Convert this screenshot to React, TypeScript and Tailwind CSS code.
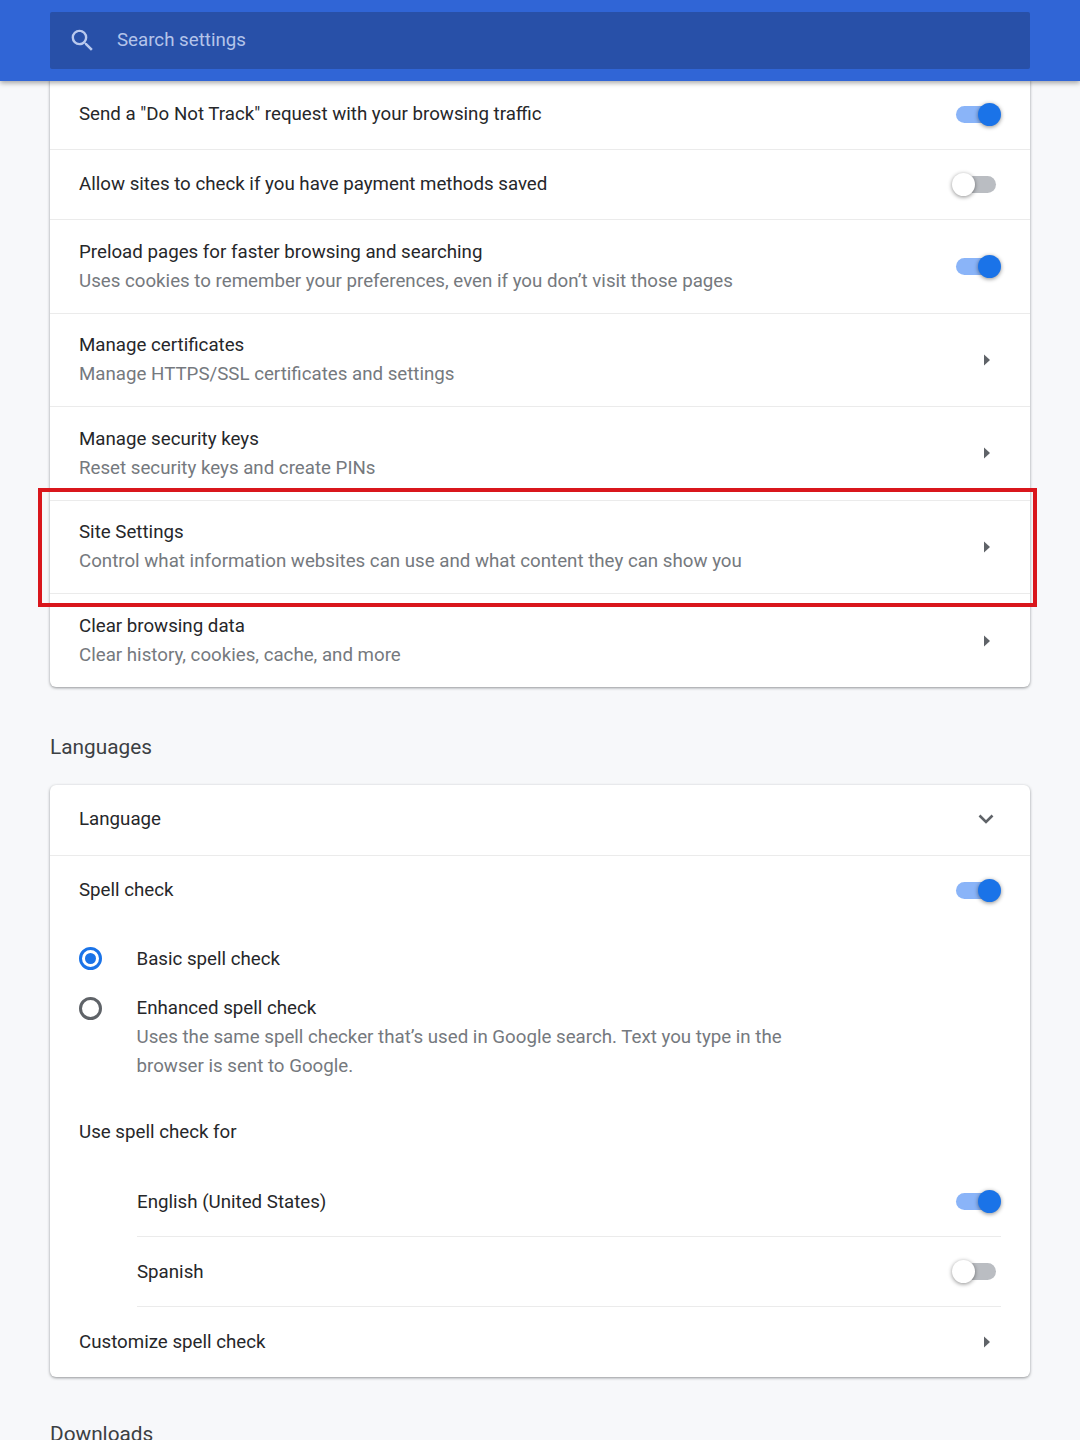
import React from "react";

const Toggle = ({ on }: { on?: boolean }) => {
  if (on) {
    return (
      <div className="relative h-[23px] w-[45px] shrink-0">
        <div className="absolute left-0 top-[3px] h-[17px] w-[40px] rounded-full bg-[#8ab4f8]" />
        <div className="absolute right-0 top-0 h-[23px] w-[23px] rounded-full bg-[#1a73e8] shadow-[0_1px_4px_rgba(0,0,0,0.45)]" />
      </div>
    );
  }
  return (
    <div className="relative mr-[5px] h-[23px] w-[44px] shrink-0">
      <div className="absolute right-0 top-[3px] h-[17px] w-[40px] rounded-full bg-[#babdc2]" />
      <div className="absolute left-0 top-0 h-[23px] w-[23px] rounded-full bg-white shadow-[0_1px_4px_rgba(0,0,0,0.45)]" />
    </div>
  );
};

const Arrow = () => (
  <svg width="8" height="12" viewBox="0 0 8 12" className="mr-[10px] shrink-0">
    <path d="M1 0.5 L7 6 L1 11.5 Z" fill="#5f6368" />
  </svg>
);

const Row = ({ title, sub, on, toggle, arrow, first, shift }: { title: string; sub?: string; on?: boolean; toggle?: boolean; arrow?: boolean; first?: boolean; shift?: boolean }) => (
  <div className={`flex items-center justify-between pl-[29px] pr-[29px] ${first ? "" : "border-t border-[#ebebeb]"} ${sub ? "h-[93.6px]" : "h-[70px]"}`}>
    <div className={shift ? "pt-[2px]" : ""}>
      <div className="text-[#26272a] leading-[29px]">{title}</div>
      {sub && <div className="text-[#75797e] leading-[29px]">{sub}</div>}
    </div>
    {toggle && <Toggle on={on} />}
    {arrow && <Arrow />}
  </div>
);

const App = () => {
  return (
    <div className="h-[1440px] overflow-hidden bg-[#f7f8fa] text-[18.72px] font-['Roboto',sans-serif]">
      {/* HEADER */}
      <div className="relative z-10 h-[81px] bg-[#3065d6] px-[50px] pt-[12px] shadow-[0_2px_5px_rgba(0,0,0,0.35)]">
        <div className="flex h-[57px] w-[980px] items-center rounded-[2px] bg-[#2850a8] pl-[17.5px]">
          <svg width="29" height="29" viewBox="0 0 24 24" fill="#b9c9ee" className="shrink-0">
            <path d="M15.5 14h-.79l-.28-.27A6.47 6.47 0 0 0 16 9.5 6.5 6.5 0 1 0 9.5 16c1.61 0 3.09-.59 4.23-1.57l.27.28v.79l5 4.99L20.49 19l-4.99-5zm-6 0C7.01 14 5 11.99 5 9.5S7.01 5 9.5 5 14 7.01 14 9.5 11.99 14 9.5 14z" />
          </svg>
          <span className="ml-[20.5px] text-[#b4c4ea]">Search settings</span>
        </div>
      </div>

      <div className="px-[50px]">
        {/* PRIVACY CARD */}
        <div className="-mt-[2px] w-[980px] rounded-b-[6px] bg-white shadow-[0_1px_3px_rgba(60,64,67,0.55)]">
          <Row first title={'Send a "Do Not Track" request with your browsing traffic'} toggle on />
          <Row title="Allow sites to check if you have payment methods saved" toggle />
          <Row shift title="Preload pages for faster browsing and searching" sub="Uses cookies to remember your preferences, even if you don’t visit those pages" toggle on />
          <Row title="Manage certificates" sub="Manage HTTPS/SSL certificates and settings" arrow />
          <Row shift title="Manage security keys" sub="Reset security keys and create PINs" arrow />
          <div className="relative">
            <Row title="Site Settings" sub="Control what information websites can use and what content they can show you" arrow />
            <div className="absolute -left-[12px] -right-[7px] -top-[12px] -bottom-[13.5px] border-[4px] border-[#d9161c]" />
          </div>
          <Row title="Clear browsing data" sub="Clear history, cookies, cache, and more" arrow />
        </div>

        {/* LANGUAGES */}
        <div className="mt-[46px] mb-[24px] text-[20.8px] leading-[28px] text-[#3c4043]">Languages</div>
        <div className="w-[980px] rounded-[6px] bg-white shadow-[0_1px_3px_rgba(60,64,67,0.55)]">
          <div className="flex h-[70px] items-center justify-between pb-[2px] pl-[29px] pr-[36px]">
            <div className="text-[#26272a]">Language</div>
            <svg width="16" height="10" viewBox="0 0 16 10" fill="none" className="shrink-0">
              <path d="M1.5 1.5 L8 8 L14.5 1.5" stroke="#5f6368" strokeWidth="2.6" />
            </svg>
          </div>
          <Row title="Spell check" toggle on />

          <div className="flex h-[64px] items-center pl-[29px] pt-[4px]">
            <div className="flex h-[23px] w-[23px] shrink-0 items-center justify-center rounded-full border-[3px] border-[#1a73e8]">
              <div className="h-[11px] w-[11px] rounded-full bg-[#1a73e8]" />
            </div>
            <div className="ml-[34.5px] text-[#26272a]">Basic spell check</div>
          </div>
          <div className="mt-[5px] flex pl-[29px]">
            <div className="mt-[3px] h-[23px] w-[23px] shrink-0 rounded-full border-[3px] border-[#5f6368]" />
            <div className="ml-[34.5px] leading-[29px]">
              <div className="text-[#26272a]">Enhanced spell check</div>
              <div className="text-[#75797e]">Uses the same spell checker that’s used in Google search. Text you type in the</div>
              <div className="text-[#75797e]">browser is sent to Google.</div>
            </div>
          </div>

          <div className="mt-[37px] pl-[29px] leading-[29px] text-[#26272a]">Use spell check for</div>

          <div className="mt-[20.5px] pl-[87px] pr-[29px]">
            <div className="flex h-[70px] items-center justify-between border-b border-[#ebebeb] text-[#26272a]">
              <span>English (United States)</span>
              <Toggle on />
            </div>
            <div className="flex h-[70px] items-center justify-between border-b border-[#ebebeb] text-[#26272a]">
              <span>Spanish</span>
              <Toggle />
            </div>
          </div>
          <div className="flex h-[70px] items-center justify-between pl-[29px] pr-[29px]">
            <div className="text-[#26272a]">Customize spell check</div>
            <Arrow />
          </div>
        </div>

        <div className="mt-[43px] text-[20.8px] leading-[28px] text-[#3c4043]">Downloads</div>
      </div>
    </div>
  );
};

export default App;
